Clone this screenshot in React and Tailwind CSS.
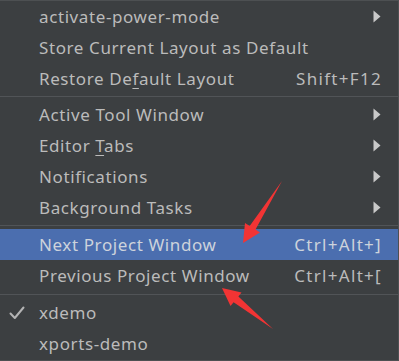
// Darcula-style popup menu with two red annotation arrows drawn over it.

const font = { fontFamily: '"Noto Sans", "Open Sans", sans-serif' };

const SubArrow = () => (
  <svg width="8" height="13" viewBox="0 0 8 13" className="block">
    <path d="M0.5 0.5 L7.5 6.5 L0.5 12.5 Z" fill="#c9c9c9" />
  </svg>
);

const Check = () => (
  <svg width="16" height="14" viewBox="0 0 16 14" className="block">
    <path d="M1.5 7.5 L5.8 12 L14.5 1.5" fill="none" stroke="#b4b4b4" strokeWidth="2" strokeLinecap="round" strokeLinejoin="round" />
  </svg>
);

const Row = ({ children, shortcut, submenu, checked, active }) => (
  <div className={`h-[31px] flex items-center ${active ? "bg-[#4b6eaf] text-[#cdd3dc]" : "text-[#bbbbbb]"}`}>
    <div className="w-[39px] pl-[9px] flex items-center">{checked && <Check />}</div>
    <div className="flex-1 whitespace-nowrap leading-none tracking-[0.6px]">{children}</div>
    <div className="pr-[17px] flex items-center justify-end whitespace-nowrap leading-none">
      {shortcut && <span className="tracking-[1.3px] -mr-[1px]">{shortcut}</span>}
      {submenu && <SubArrow />}
    </div>
  </div>
);

const Sep = ({ h = "h-[5px]", pt = "pt-[2px]" }) => (
  <div className={`${h} ${pt}`}>
    <div className="h-px bg-[#515457]" />
  </div>
);

export default function App() {
  return (
    <div className="relative w-[399px] h-[361px] overflow-hidden bg-[#3c3f41] border-t border-r border-b border-[#4d5052] text-[17px]" style={font}>
      <Row submenu>activate-power-mode</Row>
      <Row>Store Current Layout as Default</Row>
      <Row shortcut="Shift+F12">
        Restore De<u className="underline-offset-[3px]">f</u>ault Layout
      </Row>
      <Sep />
      <Row submenu>Active Tool Window</Row>
      <Row submenu>
        Editor <u className="underline-offset-[3px]">T</u>abs
      </Row>
      <Row submenu>Notifications</Row>
      <Row submenu>Background Tasks</Row>
      <Sep h="h-[6px]" pt="pt-[2px]" />
      <Row active shortcut="Ctrl+Alt+]">Next Project Window</Row>
      <Row shortcut="Ctrl+Alt+[">Previous Project Window</Row>
      <Sep h="h-[6px]" pt="pt-[3px]" />
      <Row checked>xdemo</Row>
      <Row>xports-demo</Row>

      {/* annotation arrows */}
      <svg className="absolute left-0 top-0 pointer-events-none" width="399" height="361" viewBox="0 0 399 361">
        <polygon
          points="282,180 255.5,228.6 260,231.5 243,242 245,222 249.7,225"
          fill="#f23434"
        />
        <polygon
          points="273,328 238.4,295.5 241.5,291.5 222,287 230.5,305 233.6,301.2"
          fill="#f23434"
        />
      </svg>
    </div>
  );
}
